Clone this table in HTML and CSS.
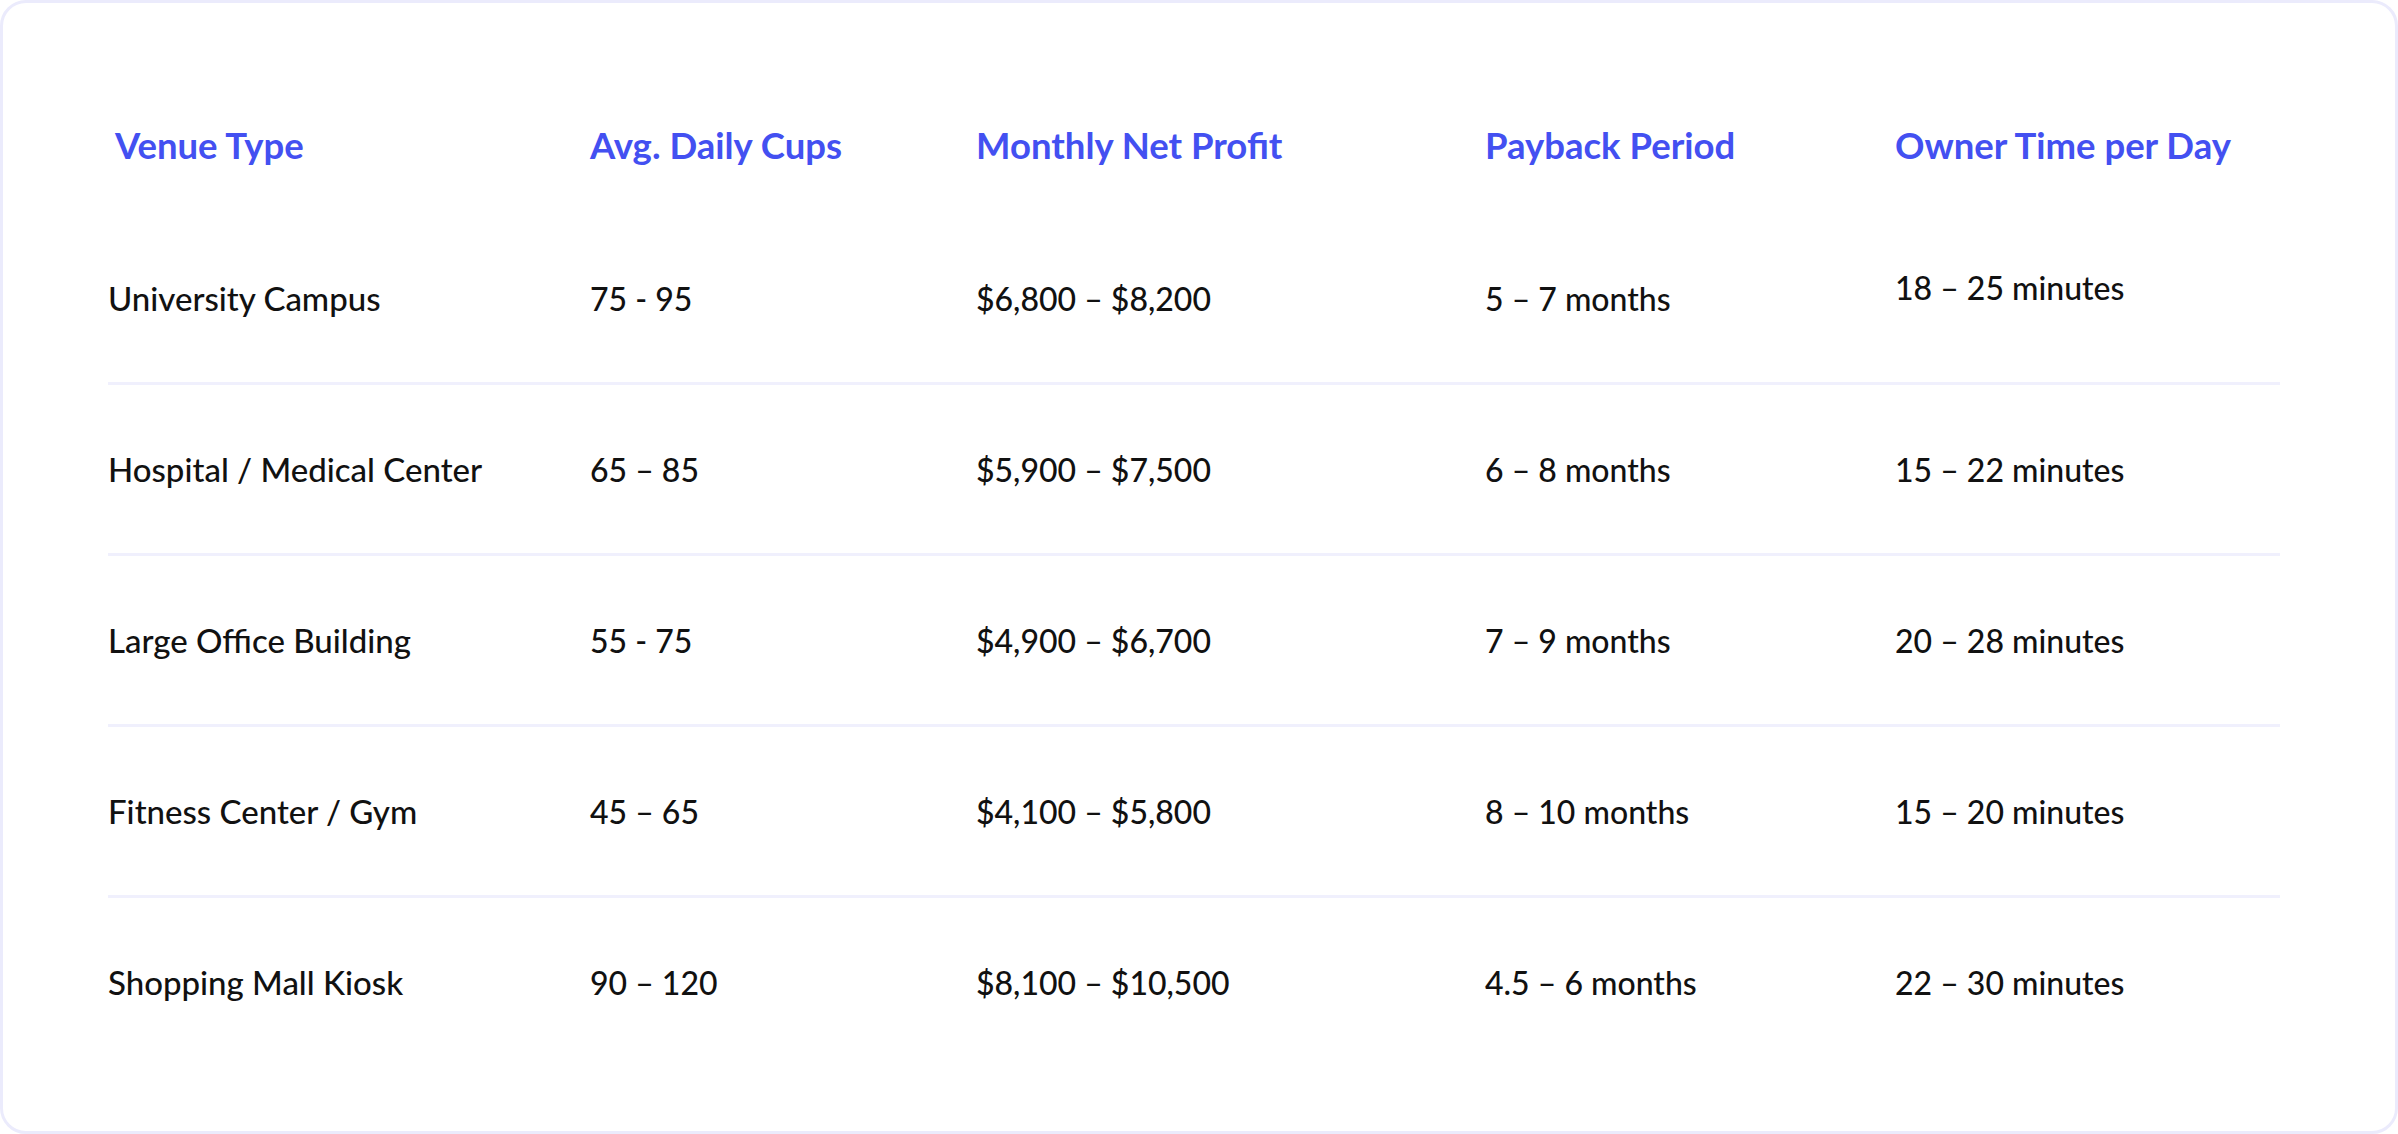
FILE: index.html
```html
<!DOCTYPE html>
<html lang="en">
<head>
<meta charset="utf-8">
<title>Venue Comparison</title>
<link rel="stylesheet" href="styles.css">
</head>
<body>
<div class="card">
  <div class="table">
    <div class="row head">
      <div class="cell first">Venue Type</div>
      <div class="cell">Avg. Daily Cups</div>
      <div class="cell">Monthly Net Profit</div>
      <div class="cell">Payback Period</div>
      <div class="cell">Owner Time per Day</div>
    </div>
    <div class="row">
      <div class="cell name">University Campus</div>
      <div class="cell">75 - 95</div>
      <div class="cell">$6,800 – $8,200</div>
      <div class="cell">5 – 7 months</div>
      <div class="cell raised">18 – 25 minutes</div>
    </div>
    <div class="row">
      <div class="cell name">Hospital / Medical Center</div>
      <div class="cell">65 – 85</div>
      <div class="cell">$5,900 – $7,500</div>
      <div class="cell">6 – 8 months</div>
      <div class="cell">15 – 22 minutes</div>
    </div>
    <div class="row">
      <div class="cell name">Large Office Building</div>
      <div class="cell">55 - 75</div>
      <div class="cell">$4,900 – $6,700</div>
      <div class="cell">7 – 9 months</div>
      <div class="cell">20 – 28 minutes</div>
    </div>
    <div class="row">
      <div class="cell name">Fitness Center / Gym</div>
      <div class="cell">45 – 65</div>
      <div class="cell">$4,100 – $5,800</div>
      <div class="cell">8 – 10 months</div>
      <div class="cell">15 – 20 minutes</div>
    </div>
    <div class="row last">
      <div class="cell name">Shopping Mall Kiosk</div>
      <div class="cell">90 – 120</div>
      <div class="cell">$8,100 – $10,500</div>
      <div class="cell">4.5 – 6 months</div>
      <div class="cell">22 – 30 minutes</div>
    </div>
  </div>
</div>
</body>
</html>
```

FILE: styles.css
```css
html, body {
  margin: 0;
  padding: 0;
  background: #ffffff;
}

body {
  font-family: "Lato", "Noto Sans", sans-serif;
  color: #111111;
}

.card {
  box-sizing: border-box;
  width: 2398px;
  height: 1134px;
  border: 3px solid #ebebfc;
  border-radius: 26px;
  background: #ffffff;
  padding: 73px 115px 0 105px;
}

.table {
  display: flex;
  flex-direction: column;
  width: 2172px;
}

.row {
  display: grid;
  grid-template-columns: 482px 386px 509px 410px 385px;
  align-items: center;
  height: 168px;
  border-bottom: 3px solid #f0f0fd;
}

.row.head {
  height: 138px;
  border-bottom: none;
}

.row.last {
  border-bottom: none;
}

.cell {
  font-size: 32px;
  font-weight: 500;
  white-space: nowrap;
}

.name {
  font-size: 33px;
}

.head .cell {
  color: #4350f1;
  font-size: 36.5px;
  font-weight: 700;
}

.head .cell.first {
  padding-left: 7px;
}

.cell.raised {
  padding-bottom: 22px;
}
```
